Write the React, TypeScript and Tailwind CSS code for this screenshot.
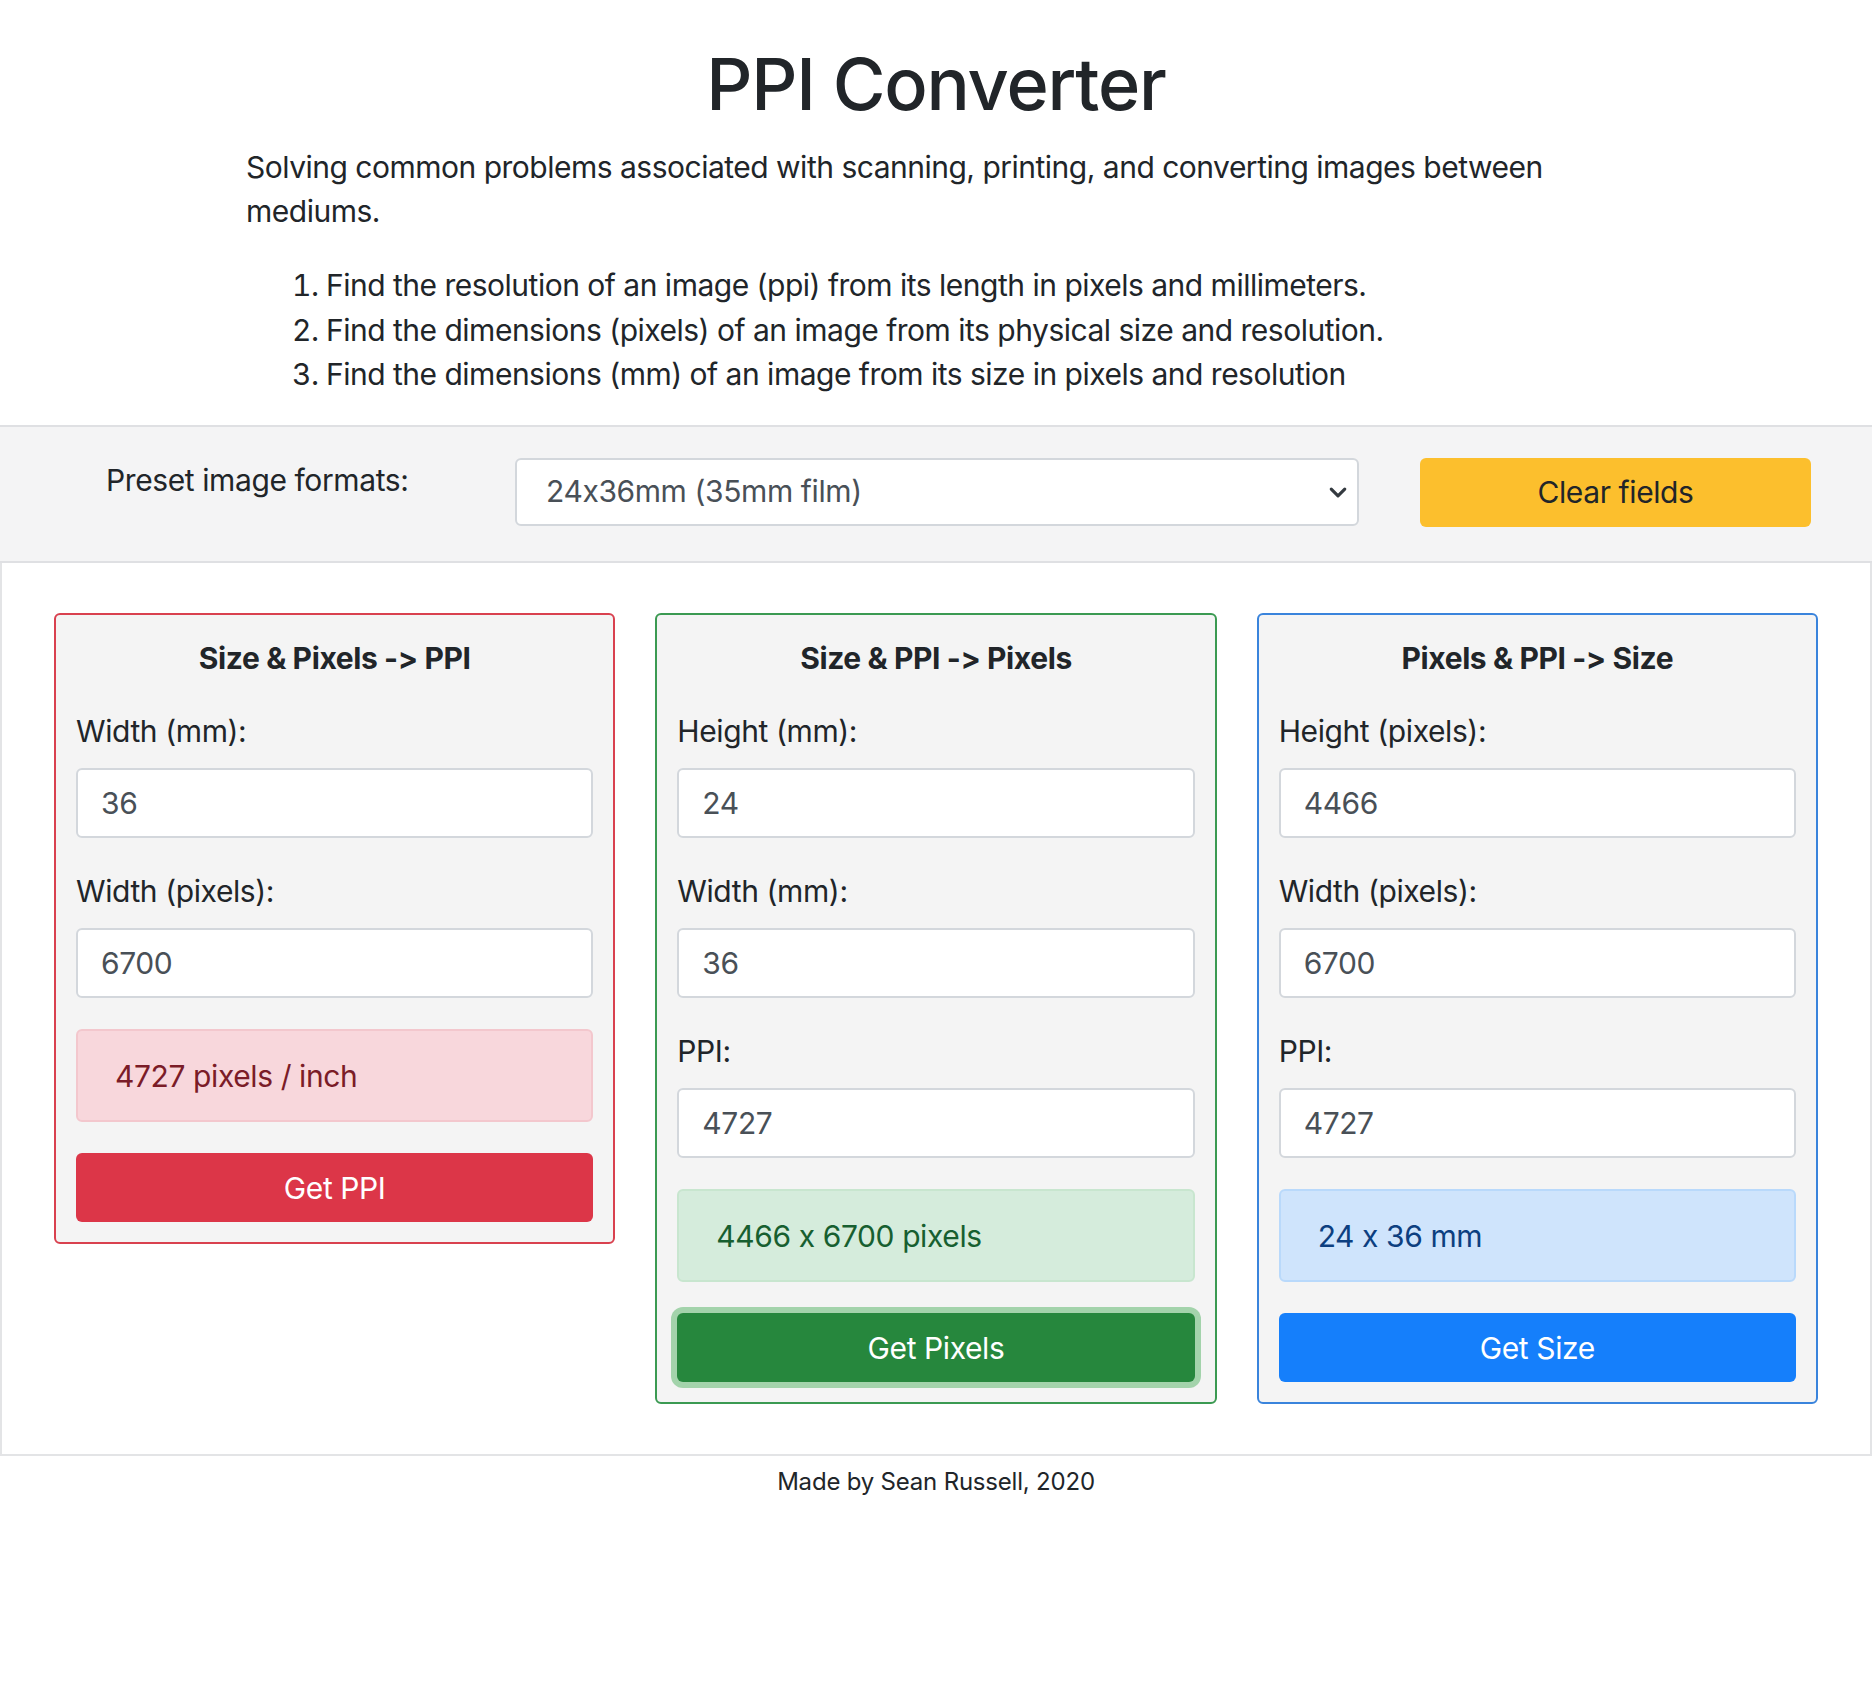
import React from 'react';

type Field = { label: string; value: string };

type Panel = {
  title: string;
  fields: Field[];
  result: string;
  button: string;
  cardBorder: string;
  alertClass: string;
  buttonClass: string;
};

const panels: Panel[] = [
  {
    title: 'Size & Pixels -> PPI',
    fields: [
      { label: 'Width (mm):', value: '36' },
      { label: 'Width (pixels):', value: '6700' },
    ],
    result: '4727 pixels / inch',
    button: 'Get PPI',
    cardBorder: 'border-[#d9414f]',
    alertClass: 'bg-[#f8d7dc] border-[#f3c7cd] text-[#7b1c28]',
    buttonClass: 'bg-[#dc3648]',
  },
  {
    title: 'Size & PPI -> Pixels',
    fields: [
      { label: 'Height (mm):', value: '24' },
      { label: 'Width (mm):', value: '36' },
      { label: 'PPI:', value: '4727' },
    ],
    result: '4466 x 6700 pixels',
    button: 'Get Pixels',
    cardBorder: 'border-[#3b9a52]',
    alertClass: 'bg-[#d5ecdc] border-[#c8e6cf] text-[#175f30]',
    buttonClass: 'bg-[#26873d] ring-[6px] ring-[#a3d3ab]',
  },
  {
    title: 'Pixels & PPI -> Size',
    fields: [
      { label: 'Height (pixels):', value: '4466' },
      { label: 'Width (pixels):', value: '6700' },
      { label: 'PPI:', value: '4727' },
    ],
    result: '24 x 36 mm',
    button: 'Get Size',
    cardBorder: 'border-[#3a84dc]',
    alertClass: 'bg-[#cfe4fc] border-[#b9d9fb] text-[#0d3f80]',
    buttonClass: 'bg-[#157ffb]',
  },
];

function ConverterCard({ panel }: { panel: Panel }) {
  return (
    <div className={`rounded-[6px] border-2 ${panel.cardBorder} bg-[#f4f4f4] px-[20px] pt-[21px] pb-[20px]`}>
      <h5 className="text-center text-[30px] leading-[45px] font-bold text-[#212529] mb-[28px]">
        {panel.title}
      </h5>
      {panel.fields.map((f) => (
        <div key={f.label} className="mb-[31px]">
          <label className="block text-[30px] leading-[45px] text-[#212529] mb-[14px]">{f.label}</label>
          <input
            type="text"
            readOnly
            value={f.value}
            className="block w-full h-[70px] rounded-[6px] border-2 border-[#d3d7dc] bg-white pl-[23px] text-[30px] text-[#495057] outline-none [font-feature-settings:'calt'_0]"
          />
        </div>
      ))}
      <div className={`rounded-[6px] border-2 ${panel.alertClass} h-[93px] pl-[37px] pt-[2px] flex items-center text-[30px] leading-[45px] mb-[31px]`}>
        {panel.result}
      </div>
      <button
        type="button"
        className={`block w-full h-[69px] rounded-[6px] ${panel.buttonClass} pt-[2px] text-white text-[30px] leading-[45px]`}
      >
        {panel.button}
      </button>
    </div>
  );
}

export default function App() {
  return (
    <div className="min-h-[1688px] bg-white text-[#212529] font-['Inter','Liberation_Sans',sans-serif] [font-feature-settings:'calt'_0] tracking-[-0.4px]">
      <header className="pt-[38px]">
        <h1 className="text-center text-[72px] leading-[92px] font-medium tracking-[-1.2px] mb-[15px]">PPI Converter</h1>
        <div className="px-[246px]">
          <p className="text-[30px] leading-[44px] tracking-[-0.5px] mb-[30px]">
            Solving common problems associated with scanning, printing, and converting images between mediums.
          </p>
          <ol className="list-decimal pl-[80px] text-[30px] leading-[44.5px] tracking-[-0.5px] mb-[28px]">
            <li>Find the resolution of an image (ppi) from its length in pixels and millimeters.</li>
            <li>Find the dimensions (pixels) of an image from its physical size and resolution.</li>
            <li>Find the dimensions (mm) of an image from its size in pixels and resolution</li>
          </ol>
        </div>
      </header>

      <section className="flex items-start bg-[#f4f4f5] border-y-2 border-[#dfe0e3] pt-[31px] pb-[34px]">
        <div className="w-[515px] pl-[106px] text-[30px] leading-[45px]">Preset image formats:</div>
        <div className="relative w-[844px]">
          <select
            defaultValue="35mm"
            className="appearance-none block w-full h-[68px] rounded-[6px] border-2 border-[#d3d7dc] bg-white pl-[29px] text-[30px] text-[#495057] outline-none [font-feature-settings:'calt'_0]"
          >
            <option value="35mm">24x36mm (35mm film)</option>
          </select>
          <svg
            className="pointer-events-none absolute right-[12px] top-1/2 -translate-y-1/2"
            width="18"
            height="14"
            viewBox="0 0 16 12"
            fill="none"
          >
            <path d="M2 3.5l6 6 6-6" stroke="#343a40" strokeWidth="2.8" strokeLinecap="round" strokeLinejoin="round" />
          </svg>
        </div>
        <button
          type="button"
          className="ml-[61px] w-[391px] h-[69px] rounded-[6px] bg-[#fcbf2d] text-[30px] text-[#212529]"
        >
          Clear fields
        </button>
      </section>

      <main className="grid grid-cols-3 items-start gap-[40px] px-[52px] pt-[50px] pb-[50px] border-x-2 border-b-2 border-[#e3e4e6]">
        {panels.map((p) => (
          <ConverterCard key={p.title} panel={p} />
        ))}
      </main>

      <footer className="text-center text-[24px] leading-[36px] tracking-[-0.2px] text-[#212529] mt-[8px]">
        Made by Sean Russell, 2020
      </footer>
    </div>
  );
}
